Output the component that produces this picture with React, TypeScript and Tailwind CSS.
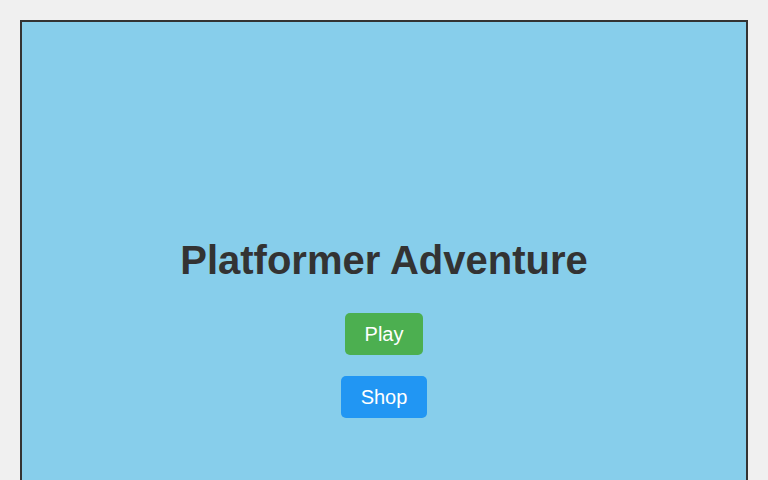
export default function App() {
    return (
        <div className="h-screen overflow-hidden bg-[#f0f0f0] p-[20px] font-['Liberation_Sans',Arial,sans-serif]">
            {/* Game canvas */}
            <div className="h-[615px] border-2 border-[#333] bg-[#87CEEB] flex flex-col items-center justify-center">
                <h1 className="text-[40px] leading-[46px] font-bold text-[#333] mb-[30px]">
                    Platformer Adventure
                </h1>
                <button className="h-[42px] px-5 text-[20px] leading-[42px] text-white bg-[#4CAF50] rounded-[5px]">
                    Play
                </button>
                <button className="h-[42px] mt-[21px] px-5 text-[20px] leading-[42px] text-white bg-[#2196F3] rounded-[5px]">
                    Shop
                </button>
            </div>
        </div>
    );
}
